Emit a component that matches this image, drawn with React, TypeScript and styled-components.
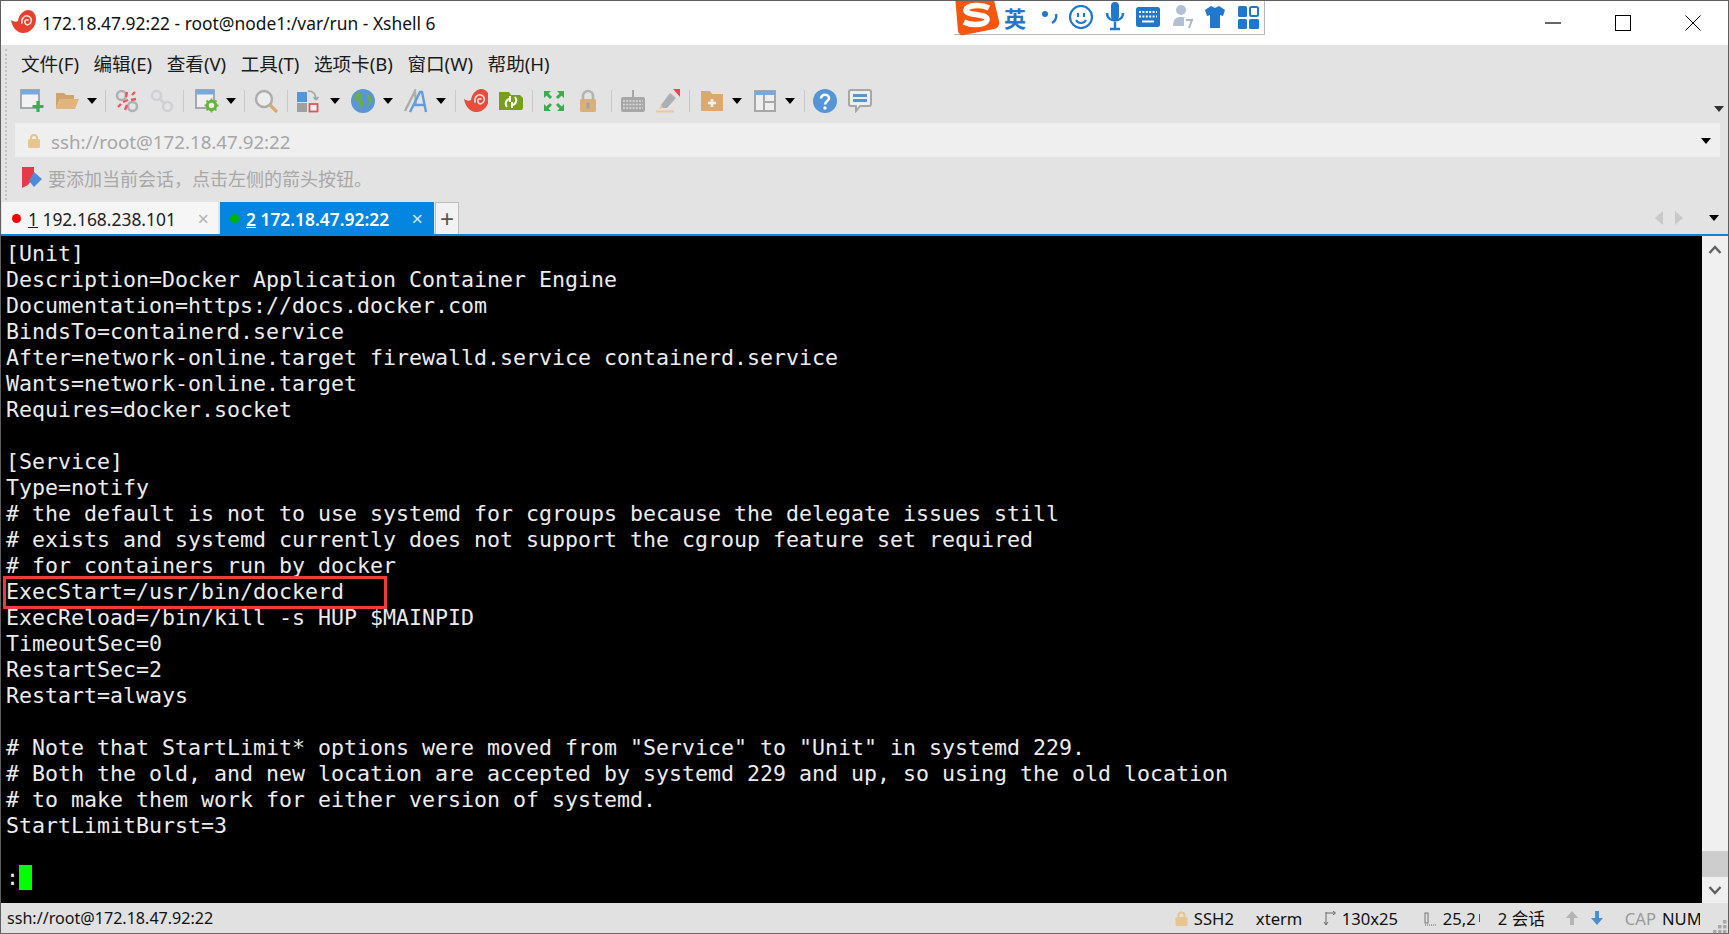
// App.tsx
// Xshell 6 session window

import * as React from "react";
import styled, { createGlobalStyle } from "styled-components";

const UI_FONT = `"Noto Sans", "Noto Sans CJK SC", sans-serif`;

const GlobalStyle = createGlobalStyle`
  html, body {
    margin: 0;
    padding: 0;
    background: #e3e3e3;
    overflow: hidden;
  }
`;

const termLines = [
  "[Unit]",
  "Description=Docker Application Container Engine",
  "Documentation=https://docs.docker.com",
  "BindsTo=containerd.service",
  "After=network-online.target firewalld.service containerd.service",
  "Wants=network-online.target",
  "Requires=docker.socket",
  "",
  "[Service]",
  "Type=notify",
  "# the default is not to use systemd for cgroups because the delegate issues still",
  "# exists and systemd currently does not support the cgroup feature set required",
  "# for containers run by docker",
  "ExecStart=/usr/bin/dockerd",
  "ExecReload=/bin/kill -s HUP $MAINPID",
  "TimeoutSec=0",
  "RestartSec=2",
  "Restart=always",
  "",
  '# Note that StartLimit* options were moved from "Service" to "Unit" in systemd 229.',
  "# Both the old, and new location are accepted by systemd 229 and up, so using the old location",
  "# to make them work for either version of systemd.",
  "StartLimitBurst=3",
  "",
];

const menus = ["文件(F)", "编辑(E)", "查看(V)", "工具(T)", "选项卡(B)", "窗口(W)", "帮助(H)"];

const Svg = ({ size = 24, h, children }: { size?: number; h?: number; children: React.ReactNode }) => (
  <svg width={size} height={h ?? size} viewBox={`0 0 ${size} ${h ?? size}`} fill="none">
    {children}
  </svg>
);

const chain = (c: string) => (
  <>
    <circle cx="6.5" cy="6.5" r="4.5" stroke={c} strokeWidth="2.6" />
    <circle cx="17.5" cy="17.5" r="4.5" stroke={c} strokeWidth="2.6" />
  </>
);

// red shell mark, used in the title bar and on the toolbar
const shell = (
  <>
    <path d="M0 10c3 2 5 2 7 1C8 4 13 0 17 0c5 0 8 4 8 9 0 8-6 14-13 14C6 23 1 17 0 10z" fill="#e8402f" />
    <path d="M11 13c-1-5 3-8 6-7 3 1 4 4 3 6-1 3-5 4-6 1-1-2 1-4 3-3" stroke="#fbe3dc" strokeWidth="1.6" strokeLinecap="round" />
  </>
);

const icons: Record<string, React.ReactNode> = {
  add: (
    <Svg>
      <rect x="1" y="1" width="18" height="18" fill="#f4f4f4" stroke="#8c9299" strokeWidth="1.6" />
      <rect x="1" y="1" width="18" height="4.5" fill="#6ea5dc" />
      <path d="M18 12v11M12.5 17.5h11" stroke="#25b03c" strokeWidth="3.2" />
    </Svg>
  ),
  open: (
    <Svg>
      <path d="M1 4h8l2 2h8v4H5L1 20z" fill="#cf9f63" />
      <path d="M5 10h19l-4 10H1z" fill="#e2b277" />
    </Svg>
  ),
  cut: (
    <Svg>
      {chain("#a9adb2")}
      <path d="M8 13l5-2M11 8l1-5M16 11l5-1M12 16l-2 5M6 15l-3 3M17 6l3-3" stroke="#ee4a55" strokeWidth="2.4" />
    </Svg>
  ),
  link: <Svg>{chain("#cfd0d2")}<path d="M9 9l6 6" stroke="#cfd0d2" strokeWidth="3" /></Svg>,
  conf: (
    <Svg>
      <rect x="1" y="1" width="18" height="18" fill="#f2f2f2" stroke="#8c9299" strokeWidth="1.6" />
      <rect x="1" y="1" width="18" height="4.5" fill="#6ea5dc" />
      <circle cx="16.5" cy="16.5" r="4.2" fill="#f2f2f2" stroke="#5eb22e" strokeWidth="3" />
      <path d="M16.5 9.5v14M9.5 16.5h14M11.5 11.5l10 10M21.5 11.5l-10 10" stroke="#5eb22e" strokeWidth="1.8" strokeDasharray="2.4 9.2" />
    </Svg>
  ),
  find: (
    <Svg>
      <circle cx="10" cy="10" r="8" fill="#eeeeee" stroke="#a8a8a8" strokeWidth="2.4" />
      <path d="M16 16l7 7" stroke="#d9a566" strokeWidth="3.2" />
    </Svg>
  ),
  tile: (
    <Svg>
      <rect x="1" y="3" width="10" height="10" fill="#4a90d9" />
      <rect x="1" y="14" width="10" height="9" fill="#9b9b9b" />
      <rect x="13.5" y="15" width="8" height="7.5" fill="#f2f2f2" stroke="#e2464e" strokeWidth="1.8" />
      <path d="M12 2c5 0 8 3 8 9M20 11l-2.5-3M20 11l2.5-3" stroke="#a0a0a0" strokeWidth="1.6" />
    </Svg>
  ),
  globe: (
    <Svg>
      <circle cx="12" cy="12" r="12" fill="#4e8fd6" />
      <path d="M4 5l5-2 3 3-2 4 3 3-2 7-3-4-1-4-4-2zM16 4l4 3 2 5-3 2-3-3zM15 16l3-1-1 4z" fill="#5da844" />
    </Svg>
  ),
  font: (
    <Svg>
      <path d="M1 22L11 2l1 14" stroke="#a9a9a9" strokeWidth="2.4" />
      <path d="M6 23L16 3h2l4 20M10 16h11" stroke="#5b97d8" strokeWidth="2.4" />
    </Svg>
  ),
  shell: <Svg>{shell}</Svg>,
  xftp: (
    <Svg>
      <path d="M0 3h10l2 3h9l3 3v10l-1 2H0z" fill="#6f9a09" />
      <path d="M8 18c-3-4 0-8 3-8M16 8c3 4 0 8-3 8M11 7v6M13 13v6" stroke="#fff" strokeWidth="2" />
    </Svg>
  ),
  full: (
    <Svg size={22}>
      <path d="M2 2l6 6M20 2l-6 6M2 20l6-6M20 20l-6-6" stroke="#2aab41" strokeWidth="3" />
      <path d="M1 1h7L1 8zM21 1h-7l7 7zM1 21h7l-7-7zM21 21h-7l7-7z" fill="#2aab41" />
    </Svg>
  ),
  lock: (
    <Svg size={18} h={24}>
      <path d="M4 11V7a5 5 0 0 1 10 0v4" stroke="#b0b0b0" strokeWidth="2.6" />
      <rect x="1" y="10" width="16" height="13" rx="1.5" fill="#d9ab72" />
      <rect x="7.5" y="13.5" width="3" height="6" fill="#9c9c9c" />
    </Svg>
  ),
  keys: (
    <Svg>
      <path d="M12 1v7" stroke="#8f8f8f" strokeWidth="1.6" />
      <rect x="0" y="8" width="24" height="15" rx="2" fill="#a2a2a2" />
      <path d="M2 12h20M2 15.5h20M2 19h20" stroke="#dadada" strokeWidth="1.6" strokeDasharray="2 1.2" />
    </Svg>
  ),
  pen: (
    <Svg>
      <path d="M0 22.5h18" stroke="#efc58f" strokeWidth="2" />
      <path d="M7 19l-2-3 9-12 6 5-9 10z" fill="#a8abb0" />
      <path d="M5 16l2 3-4 1z" fill="#efc58f" />
      <path d="M17 0h7v8z" fill="#e83a43" />
    </Svg>
  ),
  addDir: (
    <Svg size={22}>
      <path d="M0 1h9l2 3h11v17H0z" fill="#dba565" />
      <path d="M11 9v8M7 13h8" stroke="#f1f1f1" strokeWidth="2.6" />
    </Svg>
  ),
  panes: (
    <Svg size={22}>
      <rect x="1" y="1" width="20" height="20" fill="#efefef" stroke="#a2a2a2" strokeWidth="2" />
      <rect x="1" y="1" width="20" height="4" fill="#6ea5dc" />
      <path d="M10 5v16M10 12h11" stroke="#a2a2a2" strokeWidth="2" />
    </Svg>
  ),
  help: (
    <Svg>
      <circle cx="12" cy="12" r="12" fill="#4a8ed6" />
      <path d="M8 9.5c0-2.5 2-3.8 4-3.8s4 1.3 4 3.6c0 3-4 3-4 6.2" stroke="#fff" strokeWidth="2.6" />
      <circle cx="12" cy="19" r="1.7" fill="#fff" />
    </Svg>
  ),
  chat: (
    <Svg>
      <path d="M3 1h18a2 2 0 0 1 2 2v12a2 2 0 0 1-2 2h-9l-4 5v-5H3a2 2 0 0 1-2-2V3a2 2 0 0 1 2-2z" fill="#efefef" stroke="#a2a2a2" strokeWidth="2" />
      <path d="M5 6.5h14M5 11.5h14" stroke="#4a8ed6" strokeWidth="3" />
    </Svg>
  ),
};

// [kind, gap before it]; "dd" is a dropdown caret, "sep" a divider
const tools: [string, number][] = [
  ["add", 3], ["open", 11], ["dd", 9], ["sep", 9], ["cut", 9], ["link", 11], ["sep", 9],
  ["conf", 11], ["dd", 8], ["sep", 9], ["find", 9], ["sep", 9], ["tile", 8], ["dd", 11],
  ["globe", 12], ["dd", 9], ["font", 12], ["dd", 9], ["sep", 10], ["shell", 8], ["xftp", 11],
  ["sep", 9], ["full", 10], ["lock", 14], ["sep", 14], ["keys", 9], ["pen", 11], ["sep", 9],
  ["addDir", 11], ["dd", 10], ["panes", 13], ["dd", 10], ["sep", 10], ["help", 8], ["chat", 11],
];

const App = () => {
  return (
    <Win>
      <GlobalStyle />
      <TitleBar>
        <Svg size={26}>{shell}</Svg>
        <Title>172.18.47.92:22 - root@node1:/var/run - Xshell 6</Title>
        <WinBtns>
          <Svg size={16}><path d="M0 8h16" stroke="#000" strokeWidth="1.2" /></Svg>
          <Svg size={16}><rect x="0.5" y="0.5" width="15" height="15" stroke="#000" /></Svg>
          <Svg size={16}><path d="M0.5 0.5l15 15M15.5 0.5l-15 15" stroke="#000" /></Svg>
        </WinBtns>
        <ImeBar>
          <ImeLogo>
            <svg width="47" height="36" viewBox="0 0 47 36" fill="none">
              <path d="M2 -4h38l6 25c1 4-1 7-5 8L11 35c-3 1-5-1-6-4z" fill="#f4560f" />
              <path d="M36 8C28 4 14 5 13 10c-1 6 22 3 21 10-1 5-15 6-23 2" stroke="#fff" strokeWidth="5.6" />
            </svg>
          </ImeLogo>
          <ImeText>英</ImeText>
          <Svg size={16} h={22}>
            <circle cx="3" cy="8" r="3" fill="#2077cb" />
            <path d="M14 8c1 4-1 7-4 9" stroke="#2077cb" strokeWidth="2.4" />
          </Svg>
          <Svg>
            <circle cx="12" cy="12" r="11" stroke="#2077cb" strokeWidth="2.2" />
            <path d="M9 8v4M15 8v4" stroke="#2077cb" strokeWidth="2.2" />
            <path d="M7 15c2 4 8 4 10 0" stroke="#2077cb" strokeWidth="2" />
          </Svg>
          <Svg size={20} h={30}>
            <rect x="6" y="0" width="8" height="18" rx="4" fill="#2077cb" />
            <path d="M2 11c0 10 16 10 16 0M10 20v6M5 27h10" stroke="#2077cb" strokeWidth="2.4" />
          </Svg>
          <Svg h={20}>
            <rect x="0" y="0" width="24" height="20" rx="2.5" fill="#2077cb" />
            <path d="M3 5h18M3 9.5h18" stroke="#fff" strokeWidth="2" strokeDasharray="2 1.4" />
            <path d="M6 14.5h12" stroke="#fff" strokeWidth="2" />
          </Svg>
          <Svg size={22} h={26}>
            <circle cx="9" cy="6" r="5" fill="#b3bfd3" />
            <path d="M1 22c0-7 3-9 8-9s8 2 8 9z" fill="#b3bfd3" />
            <rect x="12" y="14" width="10" height="11" fill="#fff" />
            <path d="M14 16h6l-3 8" stroke="#aab6ca" strokeWidth="2" />
          </Svg>
          <Svg size={20} h={24}>
            <path d="M6 1l4 2 4-2 6 4-2 6-3-1v13H5V10l-3 1-2-6z" fill="#2077cb" />
          </Svg>
          <Svg size={22} h={24}>
            <rect x="1" y="1" width="9" height="11" rx="1.5" fill="#2077cb" />
            <rect x="13" y="2" width="8" height="9" rx="1.5" stroke="#2077cb" strokeWidth="2" />
            <rect x="1" y="14" width="9" height="10" rx="1.5" fill="#2077cb" />
            <rect x="12" y="14" width="10" height="10" rx="1.5" fill="#2077cb" />
          </Svg>
        </ImeBar>
      </TitleBar>

      <Chrome>
        <MenuBar>
          {menus.map((m) => (
            <MenuItem key={m}>{m}</MenuItem>
          ))}
        </MenuBar>
        <ToolBar>
          {tools.map(([kind, gap], i) =>
            kind === "sep" ? (
              <ToolSep key={i} $gap={gap} />
            ) : kind === "dd" ? (
              <ToolCaret key={i} $gap={gap} />
            ) : (
              <ToolIcon key={i} $gap={gap}>
                {icons[kind]}
              </ToolIcon>
            )
          )}
          <ToolMore />
        </ToolBar>
        <AddressBar>
          <Svg size={14} h={16}>
            <path d="M4 7V5a3 3 0 0 1 6 0v2" stroke="#e8c48e" strokeWidth="2" />
            <rect x="1" y="6" width="12" height="9" rx="1.5" fill="#e8c48e" />
          </Svg>
          <AddressText>ssh://root@172.18.47.92:22</AddressText>
          <AddressCaret />
        </AddressBar>
        <LinkBar>
          <Svg size={20} h={24}>
            <path d="M0 1h12v10l-6 8-6 3z" fill="#e8394a" />
            <path d="M12 6l8 7-8 8-5-6z" fill="#4a8ed6" />
          </Svg>
          <LinkText>要添加当前会话，点击左侧的箭头按钮。</LinkText>
        </LinkBar>
      </Chrome>

      <TabBar>
        <Tab>
          <TabDot $c="#f00000" />
          <TabLabel>
            <u>1</u> 192.168.238.101
          </TabLabel>
          <TabClose>×</TabClose>
        </Tab>
        <Tab $active>
          <TabDot $c="#00b400" />
          <TabLabel>
            <u>2</u> 172.18.47.92:22
          </TabLabel>
          <TabClose>×</TabClose>
        </Tab>
        <TabAdd>+</TabAdd>
        <TabNav>
          <Arrow $dir="left" />
          <Arrow $dir="right" />
          <NavCaret />
        </TabNav>
      </TabBar>

      <Main>
        <Terminal>
          {termLines.map((line, i) => (
            <Row key={i}>
              {line}
              {line.startsWith("ExecStart") && <Marker />}
            </Row>
          ))}
          <Row>
            :<Cursor />
          </Row>
        </Terminal>
        <ScrollBar>
          <ScrollBtn>
            <svg width="14" height="9" viewBox="0 0 14 9" fill="none">
              <path d="M1.5 8L7 2l5.5 6" stroke="#606060" strokeWidth="2.4" />
            </svg>
          </ScrollBtn>
          <ScrollThumb />
          <ScrollBtn>
            <svg width="14" height="9" viewBox="0 0 14 9" fill="none">
              <path d="M1.5 1L7 7l5.5-6" stroke="#606060" strokeWidth="2.4" />
            </svg>
          </ScrollBtn>
        </ScrollBar>
      </Main>

      <StatusBar>
        <StatusLeft>ssh://root@172.18.47.92:22</StatusLeft>
        <StatusItem $w={81}>
          <Svg size={13} h={15}>
            <path d="M3.5 7V4.5a3 3 0 0 1 6 0V7" stroke="#e8c48e" strokeWidth="2" />
            <rect x="0.5" y="6" width="12" height="9" rx="1.5" fill="#e8c48e" />
          </Svg>
          SSH2
        </StatusItem>
        <StatusItem $w={67}>xterm</StatusItem>
        <StatusItem $w={101}>
          <Svg size={13} h={15}>
            <path d="M3 1v13M3 2h9M1 11l2 3 2-3M10 0l2.5 2L10 4" stroke="#666" />
          </Svg>
          130x25
        </StatusItem>
        <StatusItem $w={74}>
          <Svg size={13} h={15}>
            <path d="M1 14h12" stroke="#666" strokeDasharray="1 1" />
            <rect x="1" y="2" width="3" height="10" stroke="#777" />
          </Svg>
          25,2
          <CellTick />
        </StatusItem>
        <StatusItem $w={68}>2 会话</StatusItem>
        <StatusArrows>
          <svg width="12" height="14" viewBox="0 0 12 14"><path d="M6 0l6 7H8v7H4V7H0z" fill="#b4b4b4" /></svg>
          <svg width="12" height="14" viewBox="0 0 12 14"><path d="M6 14l6-7H8V0H4v7H0z" fill="#4a8ed6" /></svg>
        </StatusArrows>
        <StatusKey $on={false}>CAP</StatusKey>
        <StatusKey $on>NUM</StatusKey>
        <Grip>
          <svg width="15" height="15" viewBox="0 0 15 15" fill="#a8a8a8">
            <rect x="10" y="1" width="3.5" height="3.5" />
            <rect x="5" y="6" width="3.5" height="3.5" />
            <rect x="10" y="6" width="3.5" height="3.5" />
            <rect x="0" y="11" width="3.5" height="3.5" />
            <rect x="5" y="11" width="3.5" height="3.5" />
            <rect x="10" y="11" width="3.5" height="3.5" />
          </svg>
        </Grip>
      </StatusBar>
    </Win>
  );
};
export default App;

const Win = styled.div`
  display: flex;
  flex-direction: column;
  width: 1729px;
  height: 934px;
  box-sizing: border-box;
  border: 1px solid #5f5f5f;
  border-bottom-color: #6a6a6a;
  font-family: ${UI_FONT};
  overflow: hidden;
`;

const TitleBar = styled.div`
  position: relative;
  display: flex;
  align-items: center;
  height: 44px;
  flex: none;
  padding-left: 10px;
  background: #fff;
`;

const Title = styled.div`
  margin-left: 5px;
  font-size: 17.4px;
  color: #111;
  white-space: nowrap;
`;

const WinBtns = styled.div`
  display: flex;
  align-items: center;
  gap: 54px;
  margin-left: auto;
  padding-right: 27px;
`;

const ImeBar = styled.div`
  position: absolute;
  left: 953px;
  top: -1px;
  width: 311px;
  height: 35px;
  box-sizing: border-box;
  display: flex;
  align-items: center;
  gap: 11.5px;
  padding-left: 50px;
  background: #fff;
  border: 1px solid #b4b8cb;
  border-top: 0;
  border-left: 0;
`;

const ImeLogo = styled.div`
  position: absolute;
  left: -1px;
  top: 0;
  height: 36px;
`;

const ImeText = styled.span`
  font-family: "Noto Sans CJK SC", sans-serif;
  font-size: 22px;
  font-weight: 700;
  color: #2077cb;
  line-height: 1;
  margin-right: 4px;
`;

const Chrome = styled.div`
  position: relative;
  flex: none;
  background: #e3e3e3;
  &::before {
    content: "";
    position: absolute;
    left: 4px;
    top: 4px;
    bottom: 2px;
    border-left: 2px dotted #c2c2c2;
  }
`;

const MenuBar = styled.div`
  display: flex;
  align-items: center;
  height: 37px;
  box-sizing: border-box;
  padding: 0 0 3px 20px;
  gap: 14.5px;
`;

const MenuItem = styled.span`
  font-size: 18.6px;
  color: #1a1a1a;
  white-space: nowrap;
`;

const ToolBar = styled.div`
  position: relative;
  display: flex;
  align-items: center;
  height: 41px;
  box-sizing: border-box;
  padding: 0 0 4px 16px;
`;

const ToolIcon = styled.div<{ $gap: number }>`
  display: flex;
  align-items: center;
  justify-content: center;
  margin-left: ${(p) => p.$gap}px;
  opacity: 0.92;
  filter: blur(0.3px);
`;

const ToolSep = styled.div<{ $gap: number }>`
  width: 1px;
  height: 22px;
  margin-left: ${(p) => p.$gap}px;
  background: #c8c8c8;
`;

const caret = `
  width: 0;
  height: 0;
  border-left: 5px solid transparent;
  border-right: 5px solid transparent;
  border-top: 6px solid #000;
`;

const ToolCaret = styled.div<{ $gap: number }>`
  ${caret}
  margin-left: ${(p) => p.$gap - 1}px;
  margin-right: -1px;
`;

const ToolMore = styled.div`
  ${caret}
  position: absolute;
  right: 4px;
  bottom: 11px;
  border-top-color: #333;
`;

const AddressBar = styled.div`
  display: flex;
  align-items: center;
  height: 34px;
  box-sizing: border-box;
  margin: 0 8px 0 14px;
  padding: 2px 0 0 12px;
  background: #efefef;
`;

const AddressText = styled.span`
  margin-left: 10px;
  font-size: 18.7px;
  color: #a6a6a6;
`;

const AddressCaret = styled.div`
  ${caret}
  margin-left: auto;
  margin-right: 9px;
`;

const LinkBar = styled.div`
  display: flex;
  align-items: center;
  height: 45px;
  padding: 0 0 3px 21px;
  box-sizing: border-box;
`;

const LinkText = styled.span`
  margin-left: 6px;
  font-size: 18px;
  color: #a8a8a8;
`;

const TabBar = styled.div`
  display: flex;
  align-items: stretch;
  height: 32px;
  flex: none;
  padding-left: 1px;
  gap: 2px;
  background: #e3e3e3;
`;

const Tab = styled.div<{ $active?: boolean }>`
  display: flex;
  align-items: center;
  width: ${(p) => (p.$active ? 214 : 216)}px;
  box-sizing: border-box;
  padding: 1px ${(p) => (p.$active ? 11 : 9)}px 0 10px;
  font-size: 17.4px;
  font-weight: ${(p) => (p.$active ? 600 : 400)};
  color: ${(p) => (p.$active ? "#fff" : "#222")};
  background: ${(p) => (p.$active ? "#0385e0" : "#f6f6f6")};
  span:last-child {
    color: ${(p) => (p.$active ? "#cfe8fa" : "#b4b4b4")};
  }
`;

const TabDot = styled.i<{ $c: string }>`
  width: 9px;
  height: 9px;
  border-radius: 50%;
  background: ${(p) => p.$c};
  margin-right: 7px;
`;

const TabLabel = styled.span`
  white-space: pre;
`;

const TabClose = styled.span`
  margin-left: auto;
  font-size: 20px;
  font-weight: 400;
  line-height: 1;
`;

const TabAdd = styled.div`
  display: flex;
  align-items: center;
  justify-content: center;
  width: 24px;
  box-sizing: border-box;
  margin-left: -1px;
  border: 1px solid #bdbdbd;
  border-bottom: 0;
  background: #f2f2f2;
  color: #555;
  font-size: 24px;
  font-family: "Liberation Sans", sans-serif;
  line-height: 1;
`;

const TabNav = styled.div`
  display: flex;
  align-items: center;
  gap: 12px;
  margin-left: auto;
  padding-right: 9px;
  padding-bottom: 1px;
`;

const Arrow = styled.div<{ $dir: "left" | "right" }>`
  width: 0;
  height: 0;
  border-top: 7px solid transparent;
  border-bottom: 7px solid transparent;
  ${(p) =>
    p.$dir === "left"
      ? "border-right: 8px solid #c9c9c9;"
      : "border-left: 8px solid #c9c9c9;"}
`;

const NavCaret = styled.div`
  ${caret}
  margin-left: 14px;
`;

const Main = styled.div`
  display: flex;
  flex: 1;
  min-height: 0;
  border-top: 2px solid #0a84dc;
  background: #000;
`;

const Terminal = styled.div`
  flex: 1;
  padding: 5px 0 0 5px;
  font-family: "DejaVu Sans Mono", monospace;
  font-size: 21.6px;
  line-height: 26px;
  color: #ececec;
  overflow: hidden;
`;

const Row = styled.div`
  position: relative;
  height: 26px;
  white-space: pre;
`;

const Marker = styled.i`
  position: absolute;
  left: -3px;
  top: -3px;
  width: 384px;
  height: 33px;
  box-sizing: border-box;
  border: 3px solid #ee3a3f;
`;

const Cursor = styled.i`
  display: inline-block;
  width: 13px;
  height: 25px;
  vertical-align: top;
  background: #00ff00;
`;

const ScrollBar = styled.div`
  display: flex;
  flex-direction: column;
  width: 26px;
  background: #f0f0f0;
`;

const ScrollBtn = styled.div`
  display: flex;
  align-items: center;
  justify-content: center;
  height: 26px;
  flex: none;
`;

const ScrollThumb = styled.div`
  height: 26px;
  margin-top: auto;
  background: #cdcdcd;
`;

const StatusBar = styled.div`
  display: flex;
  align-items: center;
  height: 30px;
  flex: none;
  padding-left: 6px;
  font-size: 16.6px;
  color: #111;
  background: #e1e1e1;
`;

const StatusLeft = styled.div`
  margin-right: auto;
  white-space: nowrap;
  font-size: 16.1px;
`;

const StatusItem = styled.div<{ $w: number }>`
  display: flex;
  align-items: center;
  gap: 6px;
  width: ${(p) => p.$w}px;
  flex: none;
  white-space: nowrap;
`;

const CellTick = styled.i`
  width: 1px;
  height: 8px;
  margin-left: -3px;
  background: #555;
`;

const StatusArrows = styled.div`
  display: flex;
  align-items: center;
  gap: 13px;
  margin-right: 22px;
`;

const StatusKey = styled.span<{ $on: boolean }>`
  color: ${(p) => (p.$on ? "#111" : "#9a9a9a")};
  margin-right: ${(p) => (p.$on ? 0 : 6)}px;
  width: ${(p) => (p.$on ? "38px" : "auto")};
  overflow: hidden;
`;

const Grip = styled.div`
  align-self: flex-end;
  margin-left: 13px;
  height: 17px;
`;
